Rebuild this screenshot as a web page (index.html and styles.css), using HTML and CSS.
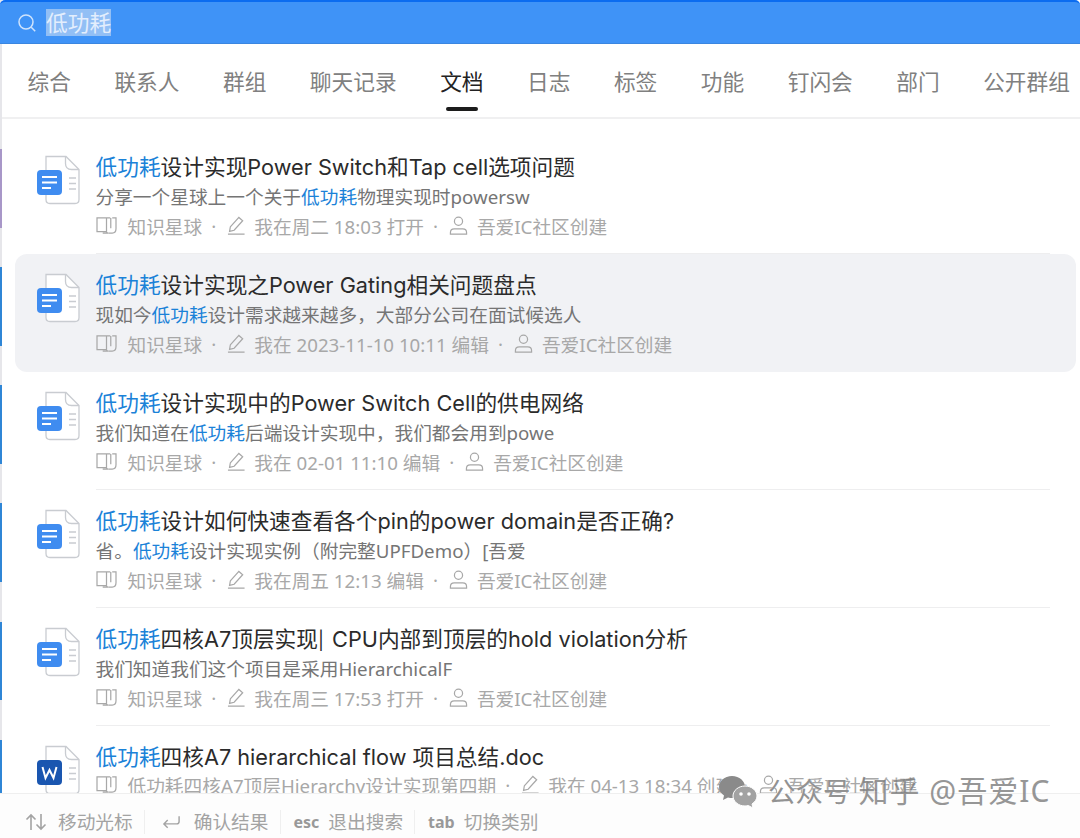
FILE: index.html
```html
<!DOCTYPE html>
<html lang="zh">
<head>
  <meta charset="UTF-8">
  <title>搜索</title>
  <link rel="stylesheet" href="styles.css">
</head>
<body>
  <svg class="sprites" width="0" height="0">
    <symbol id="book" viewBox="0 0 22 20">
      <path d="M1 2h10v14.500H1zM11 16.500c0 1 .8 1.500 1.800 1.500H7M11 2h4M17 2h4v11.500c0 2.500-1.500 4.500-4 4.500h-4M15.500 2v11" fill="none" stroke="currentColor" stroke-width="1.300"/>
    </symbol>
    <symbol id="pen" viewBox="0 0 20 20">
      <path d="M3.500 11.500 12.500 1.500l4 3.500-9 10-4.800 1.200zM1 19h17.500" fill="none" stroke="currentColor" stroke-width="1.300"/>
    </symbol>
    <symbol id="user" viewBox="0 0 20 20">
      <circle cx="10" cy="5.500" r="4.300" fill="none" stroke="currentColor" stroke-width="1.300"/>
      <path d="M1.500 19v-1.500c0-2.500 1.500-4 4-4h9c2.500 0 4 1.500 4 4V19z" fill="none" stroke="currentColor" stroke-width="1.300"/>
    </symbol>
    <symbol id="doc" viewBox="0 0 44 50">
      <path d="M10 1.500h20l13 13v30c0 2.500-1.500 4-4 4H14c-2.500 0-4-1.500-4-4z" fill="#fff" stroke="#c9ccd1" stroke-width="1.300"/>
      <path d="M29.500 1.500v7c0 4 2 6 6 6h7.500" fill="none" stroke="#c9ccd1" stroke-width="1.300"/>
      <path d="M33 23h7M33 28.500h7M33 34h7" stroke="#c9ccd1" stroke-width="1.300"/>
      <rect x="1" y="15" width="25" height="25" rx="4" fill="#3f8cf0"/>
      <path d="M6 22h15M6 27.500h15M6 33h9" stroke="#fff" stroke-width="2"/>
    </symbol>
  </svg>

  <div class="app">
    <header class="search-bar">
      <svg class="search-icon" viewBox="0 0 20 20" width="20" height="20">
        <circle cx="9" cy="9" r="7" fill="none" stroke="currentColor" stroke-width="1.500"/>
        <path d="m14.200 14.200 4 4" stroke="currentColor" stroke-width="1.500"/>
      </svg>
      <span class="search-text">低功耗</span>
    </header>

    <nav class="tabs">
      <span class="tab">综合</span>
      <span class="tab">联系人</span>
      <span class="tab">群组</span>
      <span class="tab">聊天记录</span>
      <span class="tab tab-active">文档</span>
      <span class="tab">日志</span>
      <span class="tab">标签</span>
      <span class="tab">功能</span>
      <span class="tab">钉闪会</span>
      <span class="tab">部门</span>
      <span class="tab">公开群组</span>
    </nav>

    <main class="results">
      <div class="result">
        <svg class="file-icon" width="44" height="50"><use href="#doc"/></svg>
        <div class="result-body">
          <div class="title"><em>低功耗</em>设计实现Power Switch和Tap cell选项问题</div>
          <div class="sub">分享一个星球上一个关于<em>低功耗</em>物理实现时powersw</div>
          <div class="meta">
            <svg class="meta-icon book"><use href="#book"/></svg><span>知识星球</span><i>·</i>
            <svg class="meta-icon pen"><use href="#pen"/></svg><span>我在周二 18:03 打开</span><i>·</i>
            <svg class="meta-icon"><use href="#user"/></svg><span>吾爱IC社区创建</span>
          </div>
        </div>
      </div>

      <div class="result result-hover">
        <svg class="file-icon" width="44" height="50"><use href="#doc"/></svg>
        <div class="result-body">
          <div class="title"><em>低功耗</em>设计实现之Power Gating相关问题盘点</div>
          <div class="sub">现如今<em>低功耗</em>设计需求越来越多，大部分公司在面试候选人</div>
          <div class="meta">
            <svg class="meta-icon book"><use href="#book"/></svg><span>知识星球</span><i>·</i>
            <svg class="meta-icon pen"><use href="#pen"/></svg><span>我在 2023-11-10 10:11 编辑</span><i>·</i>
            <svg class="meta-icon"><use href="#user"/></svg><span>吾爱IC社区创建</span>
          </div>
        </div>
      </div>

      <div class="result">
        <svg class="file-icon" width="44" height="50"><use href="#doc"/></svg>
        <div class="result-body">
          <div class="title"><em>低功耗</em>设计实现中的Power Switch Cell的供电网络</div>
          <div class="sub">我们知道在<em>低功耗</em>后端设计实现中，我们都会用到powe</div>
          <div class="meta">
            <svg class="meta-icon book"><use href="#book"/></svg><span>知识星球</span><i>·</i>
            <svg class="meta-icon pen"><use href="#pen"/></svg><span>我在 02-01 11:10 编辑</span><i>·</i>
            <svg class="meta-icon"><use href="#user"/></svg><span>吾爱IC社区创建</span>
          </div>
        </div>
      </div>

      <div class="result">
        <svg class="file-icon" width="44" height="50"><use href="#doc"/></svg>
        <div class="result-body">
          <div class="title"><em>低功耗</em>设计如何快速查看各个pin的power domain是否正确?</div>
          <div class="sub">省。<em>低功耗</em>设计实现实例（附完整UPFDemo）[吾爱</div>
          <div class="meta">
            <svg class="meta-icon book"><use href="#book"/></svg><span>知识星球</span><i>·</i>
            <svg class="meta-icon pen"><use href="#pen"/></svg><span>我在周五 12:13 编辑</span><i>·</i>
            <svg class="meta-icon"><use href="#user"/></svg><span>吾爱IC社区创建</span>
          </div>
        </div>
      </div>

      <div class="result">
        <svg class="file-icon" width="44" height="50"><use href="#doc"/></svg>
        <div class="result-body">
          <div class="title"><em>低功耗</em>四核A7顶层实现<span class="pipe">|</span> CPU内部到顶层的hold violation分析</div>
          <div class="sub">我们知道我们这个项目是采用HierarchicalF</div>
          <div class="meta">
            <svg class="meta-icon book"><use href="#book"/></svg><span>知识星球</span><i>·</i>
            <svg class="meta-icon pen"><use href="#pen"/></svg><span>我在周三 17:53 打开</span><i>·</i>
            <svg class="meta-icon"><use href="#user"/></svg><span>吾爱IC社区创建</span>
          </div>
        </div>
      </div>

      <div class="result">
        <svg class="file-icon" width="44" height="50" viewBox="0 0 44 50">
          <path d="M10 1.500h20l13 13v30c0 2.500-1.500 4-4 4H14c-2.500 0-4-1.500-4-4z" fill="#fff" stroke="#c9ccd1" stroke-width="1.300"/>
          <path d="M29.500 1.500v7c0 4 2 6 6 6h7.500M33 23h7M33 28.500h7M33 34h7" fill="none" stroke="#c9ccd1" stroke-width="1.300"/>
          <rect x="1" y="15" width="25" height="25" rx="4" fill="#1a56b0"/>
          <path d="M6.500 22l3 11 4-8 4 8 3-11" fill="none" stroke="#fff" stroke-width="2"/>
        </svg>
        <div class="result-body">
          <div class="title"><em>低功耗</em>四核A7 hierarchical flow 项目总结.doc</div>
          <div class="meta meta-tight">
            <svg class="meta-icon book"><use href="#book"/></svg><span>低功耗四核A7顶层Hierarchy设计实现第四期</span><i>·</i>
            <svg class="meta-icon pen"><use href="#pen"/></svg><span>我在 04-13 18:34 创建</span><i>·</i>
            <svg class="meta-icon"><use href="#user"/></svg><span>吾爱IC社区创建</span>
          </div>
        </div>
      </div>
    </main>

    <footer class="hints">
      <span class="hint">
        <svg class="arrows-icon" viewBox="0 0 22 18" width="22" height="18"><path d="M6 17V2M1.500 6.500 6 2l4.500 4.500M16 1v15M11.500 11.500 16 16l4.500-4.500" fill="none" stroke="currentColor" stroke-width="1.600"/></svg>移动光标</span>
      <span class="hint">
        <svg class="enter-icon" viewBox="0 0 20 14" width="19" height="14"><path d="M18 1v5.500c0 1.500-1 2.500-2.500 2.500H2M6 5 2 9l4 4" fill="none" stroke="currentColor" stroke-width="1.500"/></svg>确认结果</span>
      <span class="hint"><b>esc</b>退出搜索</span>
      <span class="hint"><b>tab</b>切换类别</span>
    </footer>

    <div class="watermark">
      <svg viewBox="0 0 40 34" width="40" height="34">
        <path d="M14 1C6.500 1 1 6 1 12c0 3.500 2 6.500 5 8.500L5 25l5-2.500c1.500.4 2.700.5 4 .5 6 0 13-5 13-11S21.500 1 14 1z" fill="#8a8a8a"/>
        <path d="M27 11c-6.500 0-12 4.500-12 10s5.500 10 12 10c1.200 0 2.200-.2 3.300-.5l4.700 2.500-1-4c3-2 5-5 5-8 0-5.500-5.500-10-12-10z" fill="#a2a2a2" stroke="#fff"/>
        <circle cx="23" cy="19" r="1.800" fill="#fff"/><circle cx="31" cy="19" r="1.800" fill="#fff"/>
      </svg>
      <span class="wm-text">公众号<span class="wm-over">知乎 @吾爱IC</span></span>
    </div>
  </div>
</body>
</html>
```

FILE: styles.css
```css
* {
  margin: 0;
  padding: 0;
  box-sizing: border-box;
}
body {
  background-color: #fff;
  font-family: "Noto Sans", "Noto Sans CJK SC", sans-serif;
  overflow: hidden;
}
.sprites {
  position: absolute;
}
.app {
  position: relative;
  width: 1080px;
  height: 838px;
  overflow: hidden;
  display: flex;
  flex-direction: column;
}
/* window behind the panel shows through on the left edge */
.app::before {
  content: "";
  position: absolute;
  left: 0;
  top: 0;
  bottom: 0;
  width: 2px;
  background: linear-gradient(to bottom,
    #e6e6ea 0 149px, #a897c8 149px 228px, #e6e6ea 228px 267px,
    #2f86d6 267px 346px, #e6e6ea 346px 385px,
    #2f86d6 385px 464px, #e6e6ea 464px 503px,
    #2f86d6 503px 582px, #e6e6ea 582px 622px,
    #2f86d6 622px 700px, #e6e6ea 700px 740px,
    #2f86d6 740px 819px, #e6e6ea 819px);
}

/* search */
.search-bar {
  position: relative;
  height: 44px;
  flex-shrink: 0;
  display: flex;
  align-items: center;
  padding-left: 17px;
  gap: 9px;
  background-color: #3f93f7;
  border-top: 2px solid #0b6cf0;
  border-bottom: 1px solid #3a86e0;
  border-radius: 5px 5px 0 0;
  color: #cfe3fc;
}
.search-text {
  display: block;
  height: 27px;
  line-height: 27px;
  font-size: 21.700px;
  white-space: nowrap;
  color: #e3eefd;
  background-color: #92bff5;
}

/* tabs */
.tabs {
  height: 75px;
  flex-shrink: 0;
  display: flex;
  gap: 43.500px;
  padding-left: 27.500px;
  border-bottom: 2px solid #f0f0f1;
}
.tab {
  font-size: 21.700px;
  line-height: 76px;
  color: #808080;
  white-space: nowrap;
  position: relative;
}
.tab-active {
  color: #222;
}
.tab-active::after {
  content: "";
  position: absolute;
  left: 6px;
  right: 6px;
  bottom: 6px;
  height: 4px;
  border-radius: 2px;
  background-color: #1c1c1c;
}

/* results */
.results {
  flex: 1;
  padding: 17px 0 0 15px;
  min-height: 0;
}
.result {
  height: 118px;
  display: flex;
  align-items: flex-start;
  padding: 0 0 0 21px;
  border-radius: 12px;
  position: relative;
}
.result::after {
  content: "";
  position: absolute;
  left: 81px;
  right: 30px;
  bottom: 0;
  height: 1px;
  background-color: #eeeeef;
}
.result-hover {
  background-color: #f1f2f5;
  margin-right: 4px;
}
.result-hover::after {
  display: none;
}
.file-icon {
  flex-shrink: 0;
  margin-top: 19px;
}
.result-body {
  margin-left: 15.500px;
  min-width: 0;
  padding-top: 15px;
}
.title {
  font-family: Inter, "Noto Sans CJK SC", sans-serif;
  font-size: 21.700px;
  line-height: 32px;
  color: #2b2b2b;
  white-space: nowrap;
}
.pipe {
  font-size: 18px;
  line-height: 1;
  margin-right: 2px;
}
.sub {
  font-size: 18.700px;
  line-height: 28px;
  color: #757575;
  white-space: nowrap;
}
em {
  font-style: normal;
  color: #1b82d8;
}
.meta {
  display: flex;
  align-items: center;
  height: 28px;
  font-size: 18.700px;
  color: #a8a8a8;
  white-space: nowrap;
}
.meta-tight {
  margin-top: -3px;
}
.meta i {
  font-style: normal;
  margin: 0 10px 0 9px;
}
.meta-icon {
  width: 21px;
  height: 19px;
  margin-right: 8px;
  flex-shrink: 0;
}
.meta-icon.book {
  margin-right: 11px;
}
.meta-icon.pen {
  margin-right: 7px;
}

/* footer */
.hints {
  position: absolute;
  left: 0;
  right: 0;
  bottom: 0;
  height: 45px;
  display: flex;
  align-items: center;
  padding: 11px 0 0 25px;
  background-color: #fdfdfd;
  border-top: 1px solid #efefef;
  font-size: 18.700px;
  color: #a3a3a3;
}
.hint {
  display: flex;
  align-items: center;
  padding-right: 11px;
  margin-right: 13px;
  border-right: 1px solid #efefef;
  line-height: 24px;
}
.hint:last-child {
  border-right: none;
}
.hint b {
  font-size: 16px;
  font-weight: 700;
  color: #999;
  margin-right: 9px;
}
.arrows-icon {
  margin-right: 11px;
}
.enter-icon {
  margin: 0 13px 0 4px;
}

/* watermark */
.watermark {
  position: absolute;
  left: 718px;
  top: 773px;
  display: flex;
  align-items: center;
  gap: 10px;
  color: #929292;
  font-size: 27.500px;
  line-height: 36px;
}
.wm-text {
  white-space: nowrap;
  text-shadow: 0 0 1px #fff;
}
.wm-over {
  margin-left: 8px;
  font-size: 30px;
  letter-spacing: 1px;
  color: #7d7d7d;
  opacity: 0.8;
}
```
